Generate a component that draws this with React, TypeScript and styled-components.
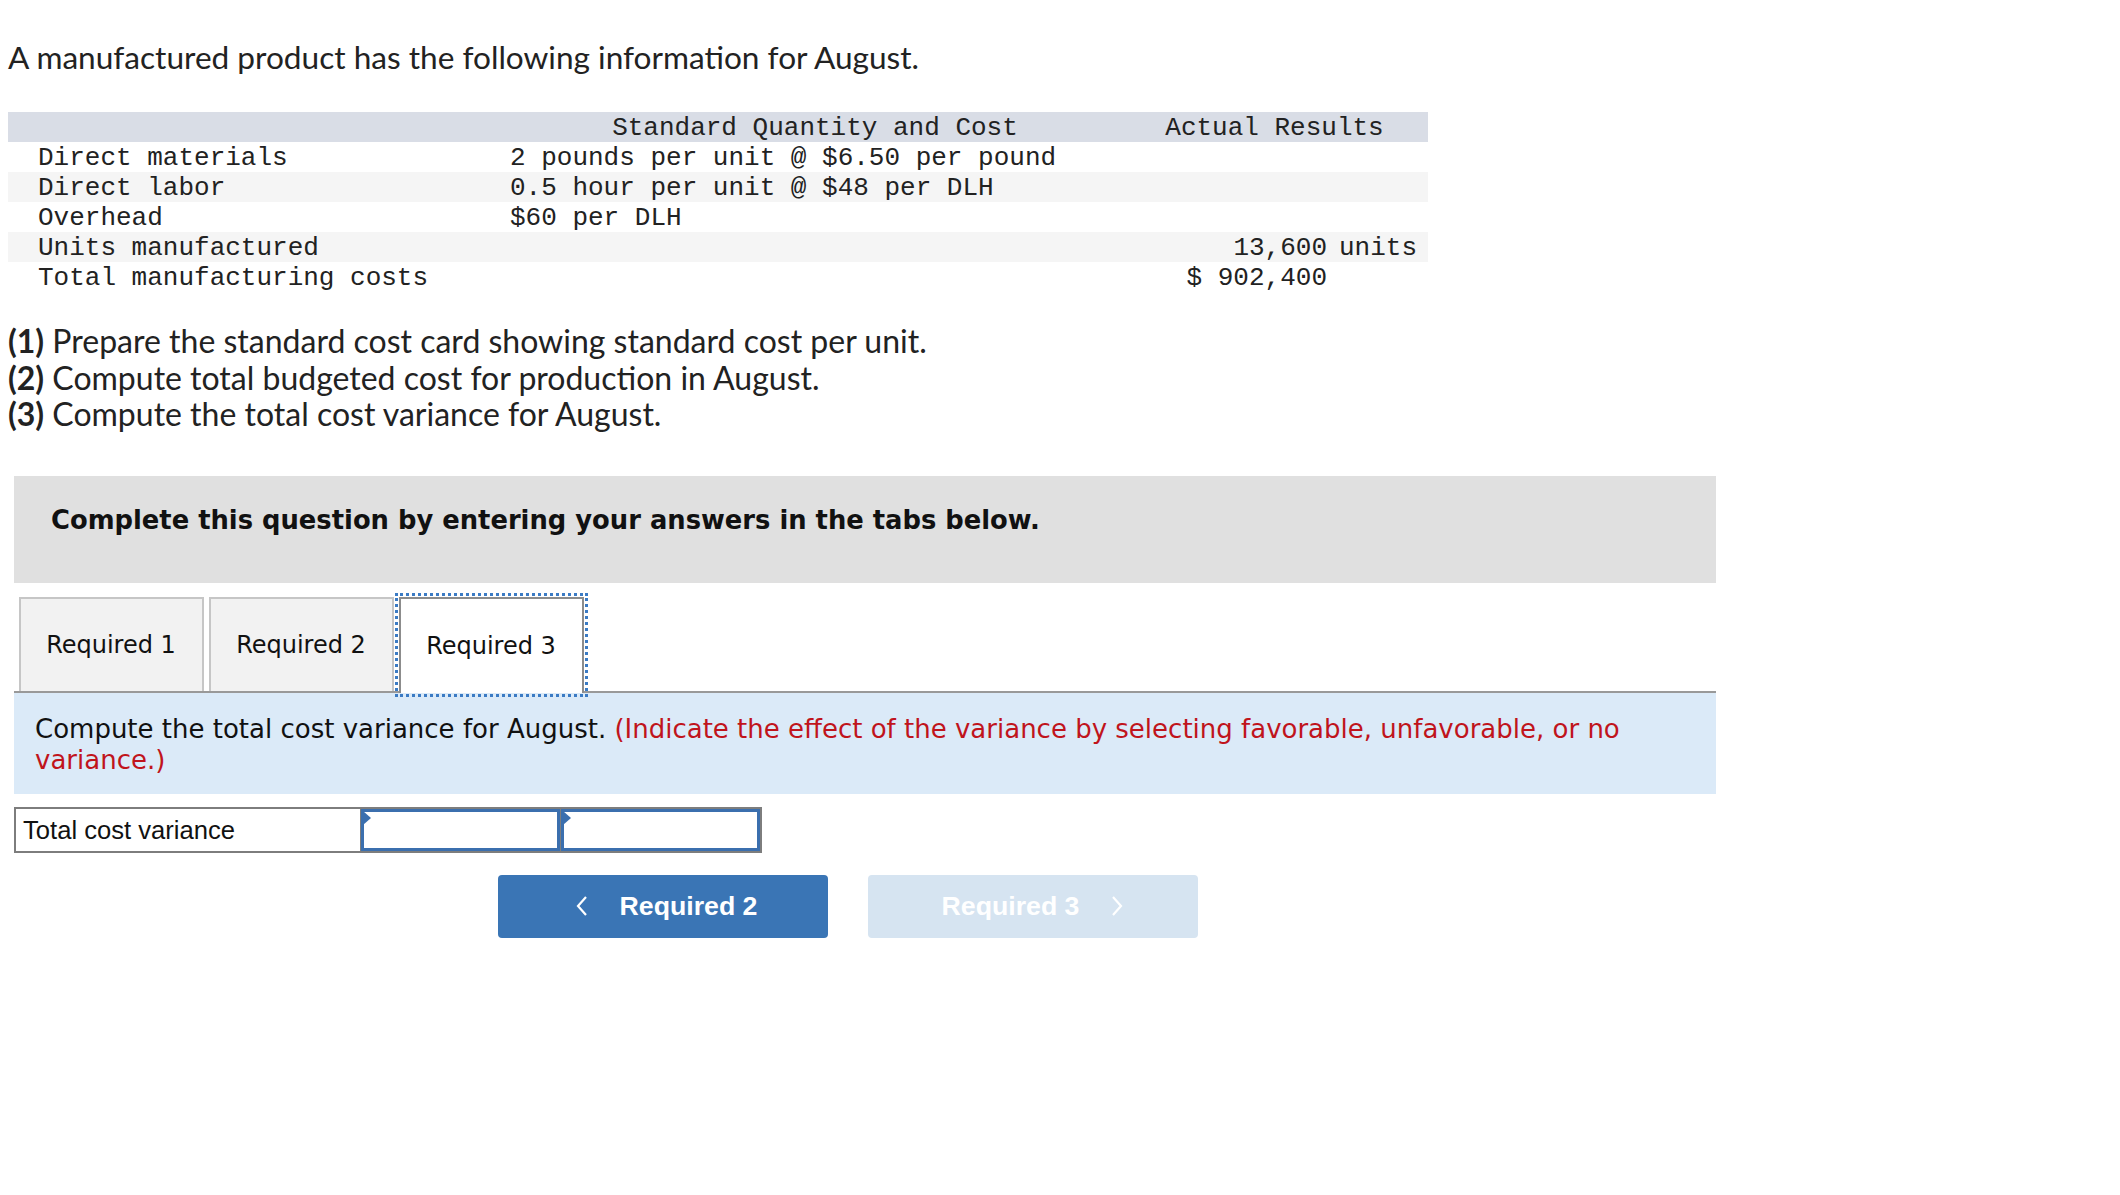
import React from "react";
import styled, { createGlobalStyle } from "styled-components";

const GlobalStyle = createGlobalStyle`
  html, body { margin: 0; padding: 0; background: #ffffff; }
  body { font-family: "Lato", "Liberation Sans", sans-serif; color: #222; }
  * { box-sizing: border-box; }
`;

const Page = styled.div`
  padding: 0 8px 40px 8px;
  width: 2120px;
`;

const Heading = styled.p`
  margin: 39px 0 0 0;
  font-family: "Lato", "Liberation Sans", sans-serif;
  font-size: 31.6px;
  line-height: 36px;
  color: #222;
`;

const DataTable = styled.div`
  margin-top: 37px;
  width: 1420px;
  font-family: "Liberation Mono", "DejaVu Sans Mono", monospace;
  font-size: 26px;
  color: #222;
`;

const Row = styled.div<{ $shade: "head" | "alt" | "plain" }>`
  display: grid;
  grid-template-columns: 491px 632px 200px 97px;
  height: 30px;
  line-height: 32px;
  white-space: pre;
  background: ${(p) =>
    p.$shade === "head" ? "#d9dde6" : p.$shade === "alt" ? "#f5f5f5" : "#ffffff"};
`;

const LabelCell = styled.div`
  padding-left: 30px;
`;

const StdCell = styled.div<{ $center?: boolean }>`
  padding-left: ${(p) => (p.$center ? "0" : "11px")};
  text-align: ${(p) => (p.$center ? "center" : "left")};
`;

const NumCell = styled.div`
  text-align: right;
  padding-right: 4px;
`;

const UnitCell = styled.div`
  padding-left: 8px;
`;

const ActualHead = styled.div`
  grid-column: 3 / span 2;
  text-align: center;
  padding-right: 10px;
`;

const Instructions = styled.div`
  margin-top: 31px;
  font-family: "Lato", "Liberation Sans", sans-serif;
  font-size: 32px;
  line-height: 36.5px;
  color: #222;
`;

const InstructionLine = styled.div`
  b { font-weight: 700; }
`;

const Question = styled.div`
  margin: 43px 0 0 6px;
  width: 1702px;
`;

const Banner = styled.div`
  height: 107px;
  background: #e0e0e0;
  padding: 29px 0 0 37px;
  font-family: "DejaVu Sans", Verdana, sans-serif;
  font-weight: 700;
  font-size: 25.8px;
  line-height: 30px;
  color: #111;
`;

const TabStrip = styled.div`
  margin-top: 14px;
  display: flex;
  gap: 5px;
  padding-left: 4.5px;
  border-bottom: 2px solid #999999;
  height: 96px;
`;

const Tab = styled.div<{ $active?: boolean }>`
  position: relative;
  width: 185px;
  height: 94px;
  display: flex;
  align-items: center;
  justify-content: center;
  font-family: "DejaVu Sans", Verdana, sans-serif;
  font-size: 24px;
  color: #111;
  background: ${(p) => (p.$active ? "#ffffff" : "#f2f2f2")};
  border: 2px solid ${(p) => (p.$active ? "#8c8c8c" : "#c6c6c6")};
  border-bottom: none;
  ${(p) =>
    p.$active
      ? `
    height: 96px;
    outline: 3px dotted #3b7bc4;
    outline-offset: 1px;
  `
      : ""}
`;

const Prompt = styled.p`
  margin: 0;
  background: #dbeaf8;
  padding: 21px 21px 18px 21px;
  font-family: "DejaVu Sans", Verdana, sans-serif;
  font-size: 26px;
  line-height: 31px;
  color: #111;
`;

const Red = styled.span`
  color: #c0141c;
`;

const AnswerRow = styled.div`
  margin-top: 13px;
  width: 748px;
  height: 46px;
  border: 2px solid #7d7d7d;
  background: #7d7d7d;
  display: grid;
  grid-template-columns: 344px 199px 199px;
  gap: 0 1px;
`;

const AnswerLabel = styled.div`
  background: #ffffff;
  font-family: "Liberation Sans", Arial, sans-serif;
  font-size: 25.6px;
  line-height: 42px;
  padding-left: 7px;
  color: #111;
`;

const AnswerInput = styled.div`
  position: relative;
  background: #ffffff;
  border: 3px solid #3b6fae;
`;

const Flag = styled.span`
  position: absolute;
  left: -1px;
  top: -1px;
  width: 0;
  height: 0;
  border-top: 7px solid transparent;
  border-bottom: 7px solid transparent;
  border-left: 8px solid #3b6fae;
`;

const NavRow = styled.div`
  margin-top: 22px;
  display: flex;
  gap: 40px;
  padding-left: 483.5px;
`;

const NavButton = styled.div<{ $disabled?: boolean }>`
  width: 330px;
  height: 63px;
  border-radius: 4px;
  background: ${(p) => (p.$disabled ? "#d6e4f1" : "#3a75b5")};
  color: #ffffff;
  display: flex;
  align-items: center;
  justify-content: center;
  gap: 32px;
  padding-left: ${(p) => (p.$disabled ? "0" : "8px")};
  font-family: "Liberation Sans", Arial, sans-serif;
  font-weight: 700;
  font-size: 26.7px;
`;

const Chevron = ({ dir }: { dir: "left" | "right" }) => (
  <svg width="12" height="22" viewBox="0 0 12 22">
    <polyline
      points={dir === "left" ? "10,2 2,11 10,20" : "2,2 10,11 2,20"}
      fill="none"
      stroke="#ffffff"
      strokeWidth="2.2"
    />
  </svg>
);

export default function App() {
  return (
    <>
      <GlobalStyle />
      <Page>
        <Heading>A manufactured product has the following information for August.</Heading>
        <DataTable>
          <Row $shade="head">
            <LabelCell />
            <StdCell $center>Standard Quantity and Cost</StdCell>
            <ActualHead>Actual Results</ActualHead>
          </Row>
          <Row $shade="plain">
            <LabelCell>Direct materials</LabelCell>
            <StdCell>2 pounds per unit @ $6.50 per pound</StdCell>
            <NumCell />
            <UnitCell />
          </Row>
          <Row $shade="alt">
            <LabelCell>Direct labor</LabelCell>
            <StdCell>0.5 hour per unit @ $48 per DLH</StdCell>
            <NumCell />
            <UnitCell />
          </Row>
          <Row $shade="plain">
            <LabelCell>Overhead</LabelCell>
            <StdCell>$60 per DLH</StdCell>
            <NumCell />
            <UnitCell />
          </Row>
          <Row $shade="alt">
            <LabelCell>Units manufactured</LabelCell>
            <StdCell />
            <NumCell>13,600</NumCell>
            <UnitCell>units</UnitCell>
          </Row>
          <Row $shade="plain">
            <LabelCell>Total manufacturing costs</LabelCell>
            <StdCell />
            <NumCell>$ 902,400</NumCell>
            <UnitCell />
          </Row>
        </DataTable>
        <Instructions>
          <InstructionLine>
            <b>(1)</b> Prepare the standard cost card showing standard cost per unit.
          </InstructionLine>
          <InstructionLine>
            <b>(2)</b> Compute total budgeted cost for production in August.
          </InstructionLine>
          <InstructionLine>
            <b>(3)</b> Compute the total cost variance for August.
          </InstructionLine>
        </Instructions>
        <Question>
          <Banner>Complete this question by entering your answers in the tabs below.</Banner>
          <TabStrip>
            <Tab>Required 1</Tab>
            <Tab>Required 2</Tab>
            <Tab $active>Required 3</Tab>
          </TabStrip>
          <Prompt>
            Compute the total cost variance for August.{" "}
            <Red>
              (Indicate the effect of the variance by selecting favorable, unfavorable, or no
              variance.)
            </Red>
          </Prompt>
          <AnswerRow>
            <AnswerLabel>Total cost variance</AnswerLabel>
            <AnswerInput>
              <Flag />
            </AnswerInput>
            <AnswerInput>
              <Flag />
            </AnswerInput>
          </AnswerRow>
          <NavRow>
            <NavButton>
              <Chevron dir="left" />
              <span>Required 2</span>
            </NavButton>
            <NavButton $disabled>
              <span>Required 3</span>
              <Chevron dir="right" />
            </NavButton>
          </NavRow>
        </Question>
      </Page>
    </>
  );
}
